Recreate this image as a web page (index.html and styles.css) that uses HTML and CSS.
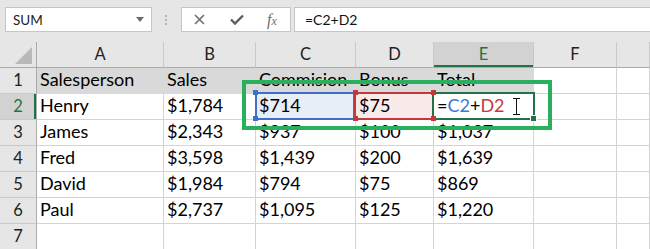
FILE: index.html
```html
<!DOCTYPE html>
<html lang="en">
<head>
<meta charset="utf-8">
<title>Excel formula</title>
<link rel="stylesheet" href="styles.css">
</head>
<body>
<div class="app">
  <div class="toolbar">
    <div class="namebox">
      <span class="name">SUM</span>
      <svg class="caret" width="8" height="5" viewBox="0 0 8 5"><path d="M0 0H8L4 5Z" fill="#6b6b6b"/></svg>
    </div>
    <div class="grip"><i></i><i></i><i></i></div>
    <div class="fbtns">
      <svg class="ico-x" width="11" height="11" viewBox="0 0 11 11"><path d="M1 1L10 10M10 1L1 10" stroke="#6e6e6e" stroke-width="1.6" fill="none"/></svg>
      <svg class="ico-check" width="14" height="11" viewBox="0 0 14 11"><path d="M1 5.5L5 9.5L13 1.5" stroke="#5c5c5c" stroke-width="2.4" fill="none"/></svg>
      <span class="fx">f<span class="fx-x">x</span></span>
    </div>
    <div class="finput">=C2+D2</div>
  </div>

  <div class="sheet">
    <div class="h corner"><svg width="18" height="18" viewBox="0 0 18 18"><path d="M17 0V17H0Z" fill="#b9b9b9"/></svg></div>
    <div class="h col">A</div>
    <div class="h col">B</div>
    <div class="h col">C</div>
    <div class="h col">D</div>
    <div class="h col sel-col">E</div>
    <div class="h col">F</div>
    <div class="h col"></div>

    <div class="h row">1</div>
    <div class="c title">Salesperson</div>
    <div class="c title">Sales</div>
    <div class="c title">Commision</div>
    <div class="c title">Bonus</div>
    <div class="c title">Total</div>
    <div class="c"></div>
    <div class="c"></div>

    <div class="h row sel-row">2</div>
    <div class="c">Henry</div>
    <div class="c">$1,784</div>
    <div class="c ref-c">$714<i class="hd tl"></i><i class="hd bl"></i></div>
    <div class="c ref-d">$75<i class="hd tl"></i><i class="hd bl"></i><i class="hd tr"></i><i class="hd br"></i></div>
    <div class="c active">=<span class="t-c">C2</span>+<span class="t-d">D2</span><i class="fill"></i>
      <svg class="ibeam" width="9" height="17" viewBox="0 0 9 17"><path d="M1 0.5H8M4.5 0.5V16.5M1 16.5H8" stroke="#111" stroke-width="1" fill="none"/></svg>
    </div>
    <div class="c"></div>
    <div class="c"></div>

    <div class="h row">3</div>
    <div class="c">James</div>
    <div class="c">$2,343</div>
    <div class="c">$937</div>
    <div class="c">$100</div>
    <div class="c">$1,037</div>
    <div class="c"></div>
    <div class="c"></div>

    <div class="h row">4</div>
    <div class="c">Fred</div>
    <div class="c">$3,598</div>
    <div class="c">$1,439</div>
    <div class="c">$200</div>
    <div class="c">$1,639</div>
    <div class="c"></div>
    <div class="c"></div>

    <div class="h row">5</div>
    <div class="c">David</div>
    <div class="c">$1,984</div>
    <div class="c">$794</div>
    <div class="c">$75</div>
    <div class="c">$869</div>
    <div class="c"></div>
    <div class="c"></div>

    <div class="h row">6</div>
    <div class="c">Paul</div>
    <div class="c">$2,737</div>
    <div class="c">$1,095</div>
    <div class="c">$125</div>
    <div class="c">$1,220</div>
    <div class="c"></div>
    <div class="c"></div>

    <div class="h row">7</div>
    <div class="c"></div>
    <div class="c"></div>
    <div class="c"></div>
    <div class="c"></div>
    <div class="c"></div>
    <div class="c"></div>
    <div class="c"></div>
  </div>

  <div class="focus-box"></div>
</div>
</body>
</html>
```

FILE: styles.css
```css
html, body {
  margin: 0;
  padding: 0;
  background: #ffffff;
}

body {
  width: 650px;
  height: 249px;
  overflow: hidden;
  font-family: Lato, "Noto Sans", sans-serif;
  color: #000;
}

.app {
  position: relative;
  width: 650px;
  height: 249px;
  overflow: hidden;
}

/* ---------- formula bar ---------- */
.toolbar {
  display: flex;
  align-items: flex-start;
  height: 42px;
  box-sizing: border-box;
  padding: 7px 0 0 5px;
  background: #e6e6e6;
}

.namebox {
  width: 147px;
  height: 25px;
  box-sizing: border-box;
  border: 1px solid #c6c6c6;
  background: #fff;
  display: flex;
  align-items: center;
  padding-left: 7px;
  font-size: 13.5px;
  color: #222;
}

.caret {
  margin-left: auto;
  margin-right: 7px;
}

.grip {
  display: flex;
  flex-direction: column;
  gap: 2px;
  margin: 8px 0 0 13px;
}

.grip i {
  display: block;
  width: 2px;
  height: 2px;
  background: #b3b3b3;
}

.fbtns {
  width: 110px;
  height: 25px;
  box-sizing: border-box;
  margin-left: 14px;
  border: 1px solid #c6c6c6;
  background: #fff;
  display: flex;
  align-items: center;
  padding-left: 12px;
}

.ico-check {
  margin-left: 25px;
}

.fx {
  margin-left: 23px;
  font-family: "Liberation Serif", serif;
  font-style: italic;
  font-size: 16px;
  color: #6e6e6e;
  line-height: 1;
}

.fx-x {
  font-size: 12px;
}

.finput {
  flex: 1;
  height: 25px;
  box-sizing: border-box;
  margin-left: 3px;
  border: 1px solid #c6c6c6;
  border-right: none;
  background: #fff;
  padding-left: 10px;
  font-size: 14px;
  line-height: 23px;
  color: #111;
}

/* ---------- sheet ---------- */
.sheet {
  display: grid;
  grid-template-columns: 37px 127px 92px 100px 78px 100px 83px 1fr;
  grid-template-rows: 26px;
  grid-auto-rows: 26px;
  background: #fff;
}

.h {
  background: #e6e6e6;
  box-sizing: border-box;
  border-right: 1px solid #c9c9c9;
  border-bottom: 1px solid #c9c9c9;
  text-align: center;
  font-size: 16.5px;
  color: #222;
  line-height: 24px;
}

.col {
  border-bottom-color: #ababab;
}

.corner {
  border-right-color: #ababab;
  border-bottom-color: #ababab;
  display: flex;
  align-items: flex-end;
  justify-content: flex-end;
  padding: 0 3px 2px 0;
}

.corner svg {
  display: block;
}

.row {
  border-right-color: #ababab;
  line-height: 24px;
}

.sel-col {
  background: #d2d2d2;
  color: #217346;
  box-shadow: inset 0 -2px 0 #217346;
}

.sel-row {
  background: #d2d2d2;
  color: #217346;
  box-shadow: inset -2px 0 0 #217346;
}

.c {
  position: relative;
  box-sizing: border-box;
  border-right: 1px solid #d4d4d4;
  border-bottom: 1px solid #d4d4d4;
  padding-left: 3px;
  font-size: 18px;
  line-height: 23px;
  white-space: nowrap;
}

.title {
  background: #d9d9d9;
  border-color: #d9d9d9;
}

/* referenced ranges */
.ref-c {
  background: #e8eef8;
}

.ref-c::after {
  content: "";
  position: absolute;
  left: -1px;
  top: -2px;
  right: 0;
  bottom: -1px;
  border: 2px solid #3f6fc6;
}

.ref-d {
  background: #f9e9e9;
}

.ref-d::after {
  content: "";
  position: absolute;
  left: -2px;
  top: -2px;
  right: -1px;
  bottom: -1px;
  border: 2px solid #c0393b;
}

.hd {
  position: absolute;
  width: 5px;
  height: 5px;
  z-index: 2;
}

.ref-c .hd { background: #3f6fc6; }
.ref-d .hd { background: #c0393b; }

.hd.tl { left: -3px; top: -4px; }
.hd.bl { left: -3px; bottom: -2px; }
.hd.tr { right: -3px; top: -4px; }
.hd.br { right: -3px; bottom: -2px; }

/* active cell */
.active::after {
  content: "";
  position: absolute;
  left: -2px;
  top: -2px;
  right: -2px;
  bottom: -1px;
  border: 2px solid #217346;
}

.t-c { color: #3b78d6; }
.t-d { color: #c9373a; }

.fill {
  position: absolute;
  right: -4px;
  bottom: -3px;
  width: 5px;
  height: 5px;
  background: #217346;
  border: 1px solid #fff;
  z-index: 2;
}

.ibeam {
  position: absolute;
  left: 78px;
  top: 4px;
}

/* tutorial highlight */
.focus-box {
  position: absolute;
  left: 242px;
  top: 80px;
  width: 310px;
  height: 50px;
  box-sizing: border-box;
  border: 4px solid #29b05f;
  z-index: 5;
}
```
